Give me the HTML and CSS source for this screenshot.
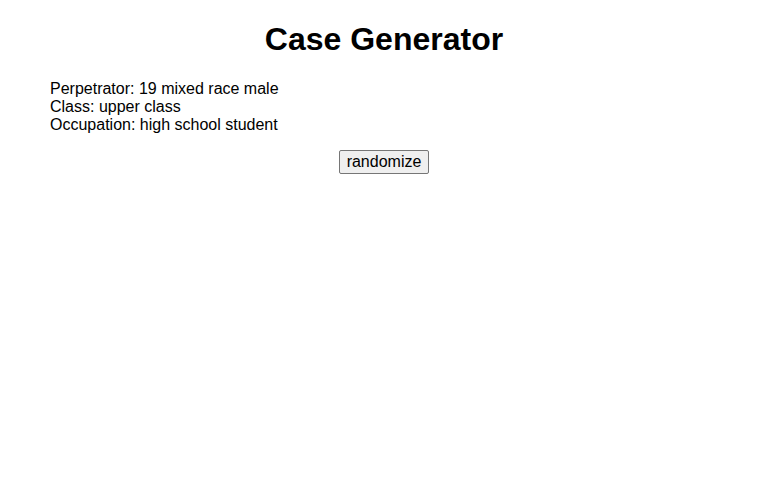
FILE: index.html
```html
<!DOCTYPE html>
<html>
<head>
<meta charset="utf-8">
<link rel="stylesheet" href="styles.css">
</head>
<body>
<h1 class="title">Case Generator</h1>
<div class="case">
  <div>Perpetrator: 19 mixed race male</div>
  <div>Class: upper class</div>
  <div>Occupation: high school student</div>
</div>
<div class="actions">
  <button class="btn">randomize</button>
</div>
</body>
</html>
```

FILE: styles.css
```css
html, body {
  margin: 0;
  padding: 0;
  background: #fff;
  color: #000;
  font-family: "Liberation Sans", Arial, sans-serif;
  font-size: 16px;
}
.title {
  font-size: 32px;
  font-weight: bold;
  text-align: center;
  margin: 21px 0 22px;
}
.case {
  padding-left: 50px;
  line-height: 18px;
}
.actions {
  display: flex;
  justify-content: center;
  margin-top: 16px;
}
.btn {
  font-family: "Liberation Sans", Arial, sans-serif;
  font-size: 16px;
  color: #000;
  background: #efefef;
  border: 1px solid #767676;
  border-radius: 2px;
  padding: 1px 6px;
  height: 24px;
  width: 90px;
}
```
